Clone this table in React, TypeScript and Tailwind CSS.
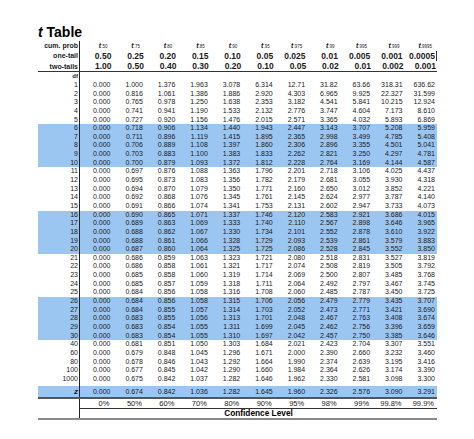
import React from 'react';

const subs = ['.50', '.75', '.80', '.85', '.90', '.95', '.975', '.99', '.995', '.999', '.9995'];
const oneTail = ['0.50', '0.25', '0.20', '0.15', '0.10', '0.05', '0.025', '0.01', '0.005', '0.001', '0.0005'];
const twoTails = ['1.00', '0.50', '0.40', '0.30', '0.20', '0.10', '0.05', '0.02', '0.01', '0.002', '0.001'];
const pct = ['0%', '50%', '60%', '70%', '80%', '90%', '95%', '98%', '99%', '99.8%', '99.9%'];

const rows: [string, string][] = [
    ['1', '0.000 1.000 1.376 1.963 3.078 6.314 12.71 31.82 63.66 318.31 636.62'],
    ['2', '0.000 0.816 1.061 1.386 1.886 2.920 4.303 6.965 9.925 22.327 31.599'],
    ['3', '0.000 0.765 0.978 1.250 1.638 2.353 3.182 4.541 5.841 10.215 12.924'],
    ['4', '0.000 0.741 0.941 1.190 1.533 2.132 2.776 3.747 4.604 7.173 8.610'],
    ['5', '0.000 0.727 0.920 1.156 1.476 2.015 2.571 3.365 4.032 5.893 6.869'],
    ['6', '0.000 0.718 0.906 1.134 1.440 1.943 2.447 3.143 3.707 5.208 5.959'],
    ['7', '0.000 0.711 0.896 1.119 1.415 1.895 2.365 2.998 3.499 4.785 5.408'],
    ['8', '0.000 0.706 0.889 1.108 1.397 1.860 2.306 2.896 3.355 4.501 5.041'],
    ['9', '0.000 0.703 0.883 1.100 1.383 1.833 2.262 2.821 3.250 4.297 4.781'],
    ['10', '0.000 0.700 0.879 1.093 1.372 1.812 2.228 2.764 3.169 4.144 4.587'],
    ['11', '0.000 0.697 0.876 1.088 1.363 1.796 2.201 2.718 3.106 4.025 4.437'],
    ['12', '0.000 0.695 0.873 1.083 1.356 1.782 2.179 2.681 3.055 3.930 4.318'],
    ['13', '0.000 0.694 0.870 1.079 1.350 1.771 2.160 2.650 3.012 3.852 4.221'],
    ['14', '0.000 0.692 0.868 1.076 1.345 1.761 2.145 2.624 2.977 3.787 4.140'],
    ['15', '0.000 0.691 0.866 1.074 1.341 1.753 2.131 2.602 2.947 3.733 4.073'],
    ['16', '0.000 0.690 0.865 1.071 1.337 1.746 2.120 2.583 2.921 3.686 4.015'],
    ['17', '0.000 0.689 0.863 1.069 1.333 1.740 2.110 2.567 2.898 3.646 3.965'],
    ['18', '0.000 0.688 0.862 1.067 1.330 1.734 2.101 2.552 2.878 3.610 3.922'],
    ['19', '0.000 0.688 0.861 1.066 1.328 1.729 2.093 2.539 2.861 3.579 3.883'],
    ['20', '0.000 0.687 0.860 1.064 1.325 1.725 2.086 2.528 2.845 3.552 3.850'],
    ['21', '0.000 0.686 0.859 1.063 1.323 1.721 2.080 2.518 2.831 3.527 3.819'],
    ['22', '0.000 0.686 0.858 1.061 1.321 1.717 2.074 2.508 2.819 3.505 3.792'],
    ['23', '0.000 0.685 0.858 1.060 1.319 1.714 2.069 2.500 2.807 3.485 3.768'],
    ['24', '0.000 0.685 0.857 1.059 1.318 1.711 2.064 2.492 2.797 3.467 3.745'],
    ['25', '0.000 0.684 0.856 1.058 1.316 1.708 2.060 2.485 2.787 3.450 3.725'],
    ['26', '0.000 0.684 0.856 1.058 1.315 1.706 2.056 2.479 2.779 3.435 3.707'],
    ['27', '0.000 0.684 0.855 1.057 1.314 1.703 2.052 2.473 2.771 3.421 3.690'],
    ['28', '0.000 0.683 0.855 1.056 1.313 1.701 2.048 2.467 2.763 3.408 3.674'],
    ['29', '0.000 0.683 0.854 1.055 1.311 1.699 2.045 2.462 2.756 3.396 3.659'],
    ['30', '0.000 0.683 0.854 1.055 1.310 1.697 2.042 2.457 2.750 3.385 3.646'],
    ['40', '0.000 0.681 0.851 1.050 1.303 1.684 2.021 2.423 2.704 3.307 3.551'],
    ['60', '0.000 0.679 0.848 1.045 1.296 1.671 2.000 2.390 2.660 3.232 3.460'],
    ['80', '0.000 0.678 0.846 1.043 1.292 1.664 1.990 2.374 2.639 3.195 3.416'],
    ['100', '0.000 0.677 0.845 1.042 1.290 1.660 1.984 2.364 2.626 3.174 3.390'],
    ['1000', '0.000 0.675 0.842 1.037 1.282 1.646 1.962 2.330 2.581 3.098 3.300'],
];
const zRow = '0.000 0.674 0.842 1.036 1.282 1.645 1.960 2.326 2.576 3.090 3.291'.split(' ');

// df rows 6-10, 16-20, 26-30 get the blue band
const isBlue = (df: string) => {
    const n = Number(df);
    return n <= 30 && (n - 1) % 10 >= 5;
};

function Label({ children, className = '' }: { children?: React.ReactNode; className?: string }) {
    return (
        <div className={`w-[42px] shrink-0 border-r-[1.5px] border-[#222] text-right pr-[1px] ${className}`}>
            {children}
        </div>
    );
}

export default function App() {
    return (
        <div className="min-h-screen bg-white pt-[25px] pl-[38px] text-[#1a1a1a]" style={{ fontFamily: '"Liberation Sans", Arial, sans-serif' }}>
            <h1 className="text-[14px] leading-[15px] font-bold text-black">
                <span className="italic">t</span> Table
            </h1>

            <div className="w-[399px] mt-[1px]">
                {/* header */}
                <div className="flex h-[10px] items-center text-[7px] leading-[10px]">
                    <Label className="font-bold h-full">cum. prob</Label>
                    {subs.map((s) => (
                        <div key={s} className="flex-1 text-right pr-[5px] font-bold italic text-[7px]">
                            t<span className="not-italic font-normal text-[4.5px]">{s}</span>
                        </div>
                    ))}
                </div>
                <div className="flex h-[10px] items-center leading-[10px]">
                    <Label className="font-bold text-[7px] h-full">one-tail</Label>
                    {oneTail.map((v, i) => (
                        <div key={v} className={`flex-1 text-right pr-[1px] font-bold text-[8.5px] ${i === 10 ? 'border-r border-[#333]' : ''}`}>
                            {v}
                        </div>
                    ))}
                </div>
                <div className="flex h-[11px] items-center leading-[10px] border-b border-[#333]">
                    <Label className="font-bold text-[7px] h-full pt-[1px]">two-tails</Label>
                    {twoTails.map((v) => (
                        <div key={v} className="flex-1 text-right pr-[1px] font-bold text-[8.5px]">
                            {v}
                        </div>
                    ))}
                </div>
                <div className="flex h-[9px]">
                    <Label className="font-bold text-[6px] leading-[9px] h-full">df</Label>
                </div>

                {/* body */}
                {rows.map(([df, vals]) => (
                    <div key={df} className={`flex h-[8.65px] items-center text-[7px] leading-[8.65px] ${isBlue(df) ? 'bg-[#9cc6f2]' : ''}`}>
                        <Label className="h-full">{df}</Label>
                        {vals.split(' ').map((v, i) => (
                            <div key={i} className="flex-1 text-right pr-[2px]">
                                {v}
                            </div>
                        ))}
                    </div>
                ))}

                <div className="flex h-[3px]">
                    <Label className="h-full" />
                </div>

                <div className="flex h-[13px] items-center bg-[#9cc6f2] border-b-2 border-[#555] text-[7px] leading-[11px]">
                    <Label className="h-full font-bold italic text-[8px]">z</Label>
                    {zRow.map((v, i) => (
                        <div key={i} className="flex-1 text-right pr-[2px]">
                            {v}
                        </div>
                    ))}
                </div>

                <div className="flex h-[10px] items-center text-[7.5px] leading-[10px]">
                    <Label className="h-full" />
                    <div className="flex flex-1 h-full border-b border-[#333]">
                        {pct.map((v) => (
                            <div key={v} className="flex-1 text-right pr-[3px]">
                                {v}
                            </div>
                        ))}
                    </div>
                </div>

                <div className="flex h-[11px] items-center border-b-2 border-[#8a8a8a]">
                    <Label className="h-full" />
                    <div className="flex-1 text-center font-bold text-[8.3px] leading-[9px] text-black">Confidence Level</div>
                </div>
            </div>
        </div>
    );
}
